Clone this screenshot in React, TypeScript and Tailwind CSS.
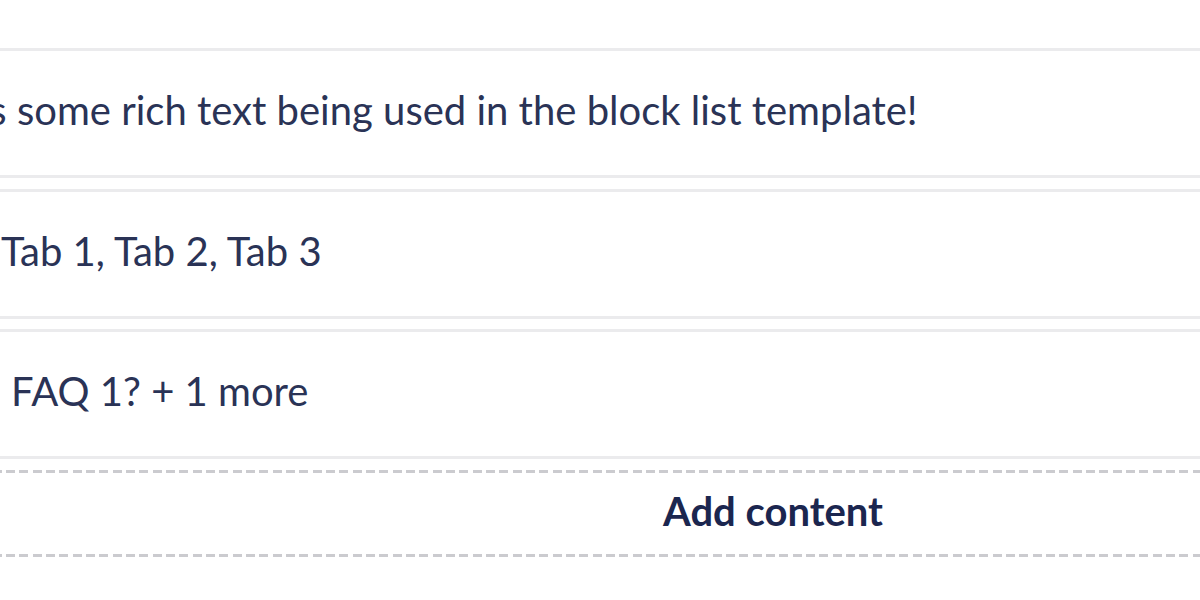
import React from "react";

const rows = [
  { text: "This is some rich text being used in the block list template!", pl: "pl-[51px]" },
  { text: "Tab 1, Tab 2, Tab 3", pl: "pl-[155px]" },
  { text: "What is FAQ 1? + 1 more", pl: "pl-[20px]" },
];

const dash =
  "block h-[3px] w-full bg-[repeating-linear-gradient(90deg,#cbcbcf_0px,#cbcbcf_9px,transparent_9px,transparent_13.333px)]";

export default function App() {
  return (
    <div
      className="w-[1200px] h-[600px] overflow-hidden bg-white"
      style={{ fontFamily: "Lato, 'Open Sans', sans-serif" }}
    >
      <div className="ml-[-154px] w-[1854px] pt-[48px]">
        <div className="flex flex-col">
          {rows.map((r, i) => (
            <div
              key={i}
              className={
                "box-border h-[130px] border-y-[3px] border-[#ebebed] flex items-center " +
                (i === 0 ? "" : i === 1 ? "mt-[11px]" : "mt-[10px]")
              }
            >
              <span
                className={
                  r.pl +
                  " pb-[6px] whitespace-nowrap text-[40px] leading-[1.2] text-[#2a3356]"
                }
              >
                {r.text}
              </span>
            </div>
          ))}
        </div>
        <button
          type="button"
          className="mt-[11px] box-border w-full h-[87px] flex flex-col bg-transparent p-0"
        >
          <span className={dash} />
          <span className="flex-1 w-full flex items-center justify-center pb-[6px] text-[40px] font-bold text-[#1b264f] leading-[1.2]">
            Add content
          </span>
          <span className={dash} />
        </button>
      </div>
    </div>
  );
}
